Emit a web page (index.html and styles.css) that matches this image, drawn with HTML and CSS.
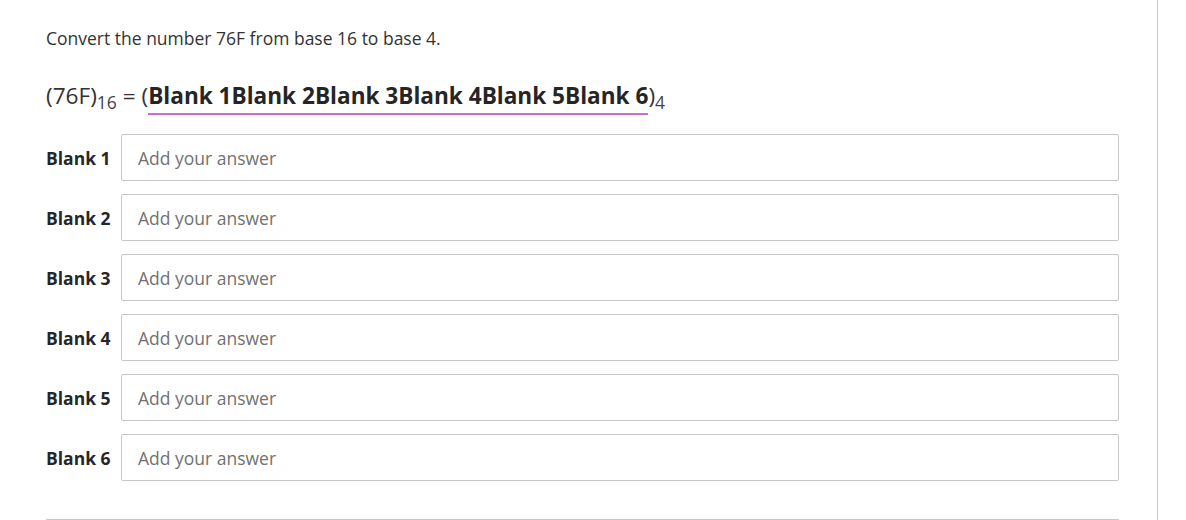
FILE: index.html
```html
<!DOCTYPE html>
<html>
<head>
<meta charset="utf-8">
<link rel="stylesheet" href="styles.css">
</head>
<body>
<div class="page">
  <div class="question">
    <p class="prompt">Convert the number 76F from base 16 to base 4.</p>
    <p class="equation">(76F)<sub>16</sub> = (<span class="blanks">Blank 1Blank 2Blank 3Blank 4Blank 5Blank 6</span>)<sub>4</sub></p>
    <div class="answers">
      <label class="row"><span class="label">Blank 1</span><input class="field" type="text" placeholder="Add your answer"></label>
      <label class="row"><span class="label">Blank 2</span><input class="field" type="text" placeholder="Add your answer"></label>
      <label class="row"><span class="label">Blank 3</span><input class="field" type="text" placeholder="Add your answer"></label>
      <label class="row"><span class="label">Blank 4</span><input class="field" type="text" placeholder="Add your answer"></label>
      <label class="row"><span class="label">Blank 5</span><input class="field" type="text" placeholder="Add your answer"></label>
      <label class="row"><span class="label">Blank 6</span><input class="field" type="text" placeholder="Add your answer"></label>
    </div>
    <div class="divider"></div>
  </div>
</div>
</body>
</html>
```

FILE: styles.css
```css
html, body {
  margin: 0;
  padding: 0;
  background: #fff;
}
body {
  font-family: "Open Sans", "Noto Sans", sans-serif;
  color: #333;
}
.page {
  width: 1157px;
  height: 520px;
  border-right: 1px solid #c8c8c8;
  box-sizing: content-box;
}
.question {
  padding: 25px 0 0 46px;
  width: 1073px;
}
.prompt {
  margin: 0;
  font-size: 17.5px;
  line-height: 26px;
  color: #333;
}
.equation {
  margin: 30px 0 0;
  font-size: 22.6px;
  line-height: 30px;
  color: #333;
}
.equation sub {
  font-size: 17.5px;
  vertical-align: -5px;
  line-height: 0;
  color: #444;
}
.blanks {
  font-weight: 700;
  color: #252525;
  border-bottom: 2px solid #c86dd6;
  padding-bottom: 2px;
}
.answers {
  margin-top: 23px;
  display: flex;
  flex-direction: column;
  gap: 13px;
}
.row {
  display: flex;
  align-items: center;
}
.label {
  width: 75px;
  flex: none;
  font-size: 17.5px;
  font-weight: 700;
  color: #262626;
}
.field {
  flex: 1;
  height: 47px;
  box-sizing: border-box;
  border: 1px solid #c8c8c8;
  border-radius: 2px;
  padding: 0 16px;
  font-family: "Open Sans", "Noto Sans", sans-serif;
  font-size: 17.5px;
  color: #333;
  background: #fff;
  outline: none;
}
.field::placeholder {
  color: #717171;
  opacity: 1;
}
.divider {
  margin-top: 38px;
  height: 1px;
  background: #c8c8c8;
}
```
